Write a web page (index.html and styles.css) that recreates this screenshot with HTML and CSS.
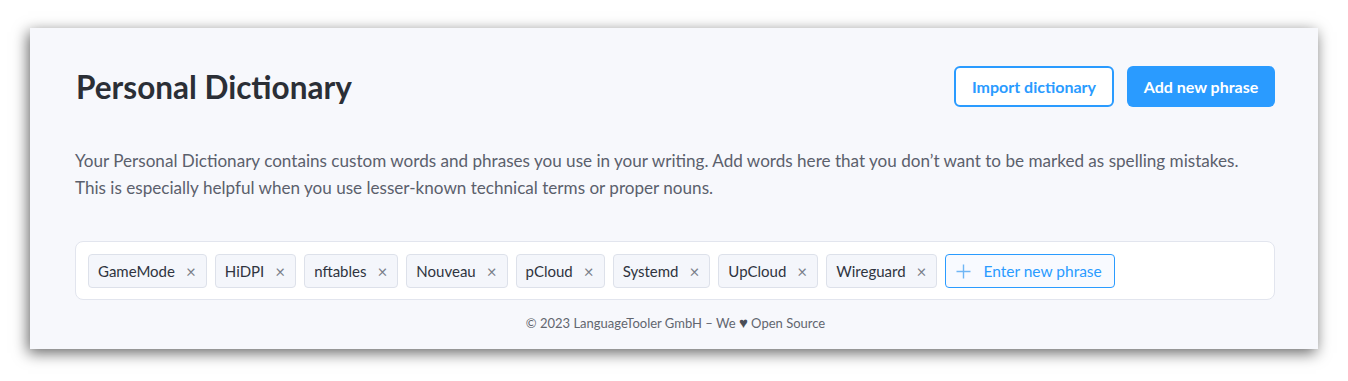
FILE: index.html
```html
<!DOCTYPE html>
<html lang="en">
<head>
    <meta charset="UTF-8">
    <meta name="viewport" content="width=device-width, initial-scale=1.0">
    <title>Personal Dictionary</title>
    <link rel="stylesheet" href="styles.css">
</head>
<body>
    <div class="window">
        <div class="page-header">
            <h1>Personal Dictionary</h1>
            <div class="actions">
                <button class="btn btn-outline">Import dictionary</button>
                <button class="btn btn-primary">Add new phrase</button>
            </div>
        </div>

        <p class="intro">
            Your Personal Dictionary contains custom words and phrases you use in your writing. Add words here that you don’t want to be marked as spelling mistakes.<br>
            This is especially helpful when you use lesser-known technical terms or proper nouns.
        </p>

        <!-- Phrase list -->
        <div class="phrase-box">
            <span class="tag">GameMode <span class="tag-remove">&times;</span></span>
            <span class="tag">HiDPI <span class="tag-remove">&times;</span></span>
            <span class="tag">nftables <span class="tag-remove">&times;</span></span>
            <span class="tag">Nouveau <span class="tag-remove">&times;</span></span>
            <span class="tag">pCloud <span class="tag-remove">&times;</span></span>
            <span class="tag">Systemd <span class="tag-remove">&times;</span></span>
            <span class="tag">UpCloud <span class="tag-remove">&times;</span></span>
            <span class="tag">Wireguard <span class="tag-remove">&times;</span></span>
            <span class="new-phrase">
                <svg width="15" height="15" viewBox="0 0 15 15"><path d="M7.5 0.5v14M0.5 7.5h14" stroke="currentColor" stroke-width="1.4" fill="none"/></svg>
                Enter new phrase
            </span>
        </div>

        <div class="footer">&copy; 2023 LanguageTooler GmbH &ndash; We <span class="heart">&hearts;</span> Open Source</div>
    </div>
</body>
</html>
```

FILE: styles.css
```css
body {
    margin: 0;
    padding: 28px 30px;
    background-color: #ffffff;
    font-family: "Source Sans Pro", Lato, "Noto Sans", sans-serif;
    color: #2c3038;
}
.window {
    width: 1288px;
    height: 321px;
    box-sizing: border-box;
    padding: 38px 43px 0 46px;
    background-color: #f7f8fc;
    box-shadow: -2px 4px 14px rgba(0, 0, 0, 0.6);
}
.page-header {
    display: flex;
    justify-content: space-between;
    align-items: center;
    height: 41px;
}
h1 {
    margin: 0;
    font-size: 31.5px;
    font-weight: 700;
    color: #2b2f36;
}
.actions {
    display: flex;
    gap: 13px;
}
.btn {
    height: 41px;
    border-radius: 6px;
    font-family: inherit;
    font-size: 16px;
    font-weight: 700;
    padding: 0;
    cursor: pointer;
}
.btn-outline {
    width: 160px;
    background-color: #ffffff;
    color: #2a9bff;
    border: 2px solid #2a9bff;
}
.btn-primary {
    width: 148px;
    background-color: #2a9bff;
    color: #ffffff;
    border: none;
}
.intro {
    margin: 40px 0 0 -1px;
    font-size: 17.1px;
    line-height: 27px;
    color: #5b606c;
}
.phrase-box {
    margin: 40px 0 0 -1px;
    display: flex;
    flex-wrap: wrap;
    gap: 8px;
    padding: 12px 12px 11px;
    background-color: #ffffff;
    border: 1px solid #e2e5ee;
    border-radius: 8px;
}
.tag {
    display: inline-flex;
    align-items: center;
    gap: 11px;
    height: 34px;
    box-sizing: border-box;
    padding: 0 10px 0 9px;
    background-color: #f4f6fb;
    border: 1px solid #dde1ea;
    border-radius: 4px;
    font-size: 15px;
    color: #2f3440;
}
.tag-remove {
    font-size: 17px;
    color: #7a7f89;
}
.new-phrase {
    display: inline-flex;
    align-items: center;
    gap: 12px;
    height: 34px;
    box-sizing: border-box;
    padding: 0 12px 0 10px;
    border: 1px solid #2a9bff;
    border-radius: 4px;
    background-color: #f8faff;
    color: #2a9bff;
    font-size: 15.5px;
}
.new-phrase svg {
    color: #6fb6f5;
}
.footer {
    margin-top: 12px;
    text-align: center;
    font-size: 13px;
    line-height: 20px;
    color: #62666f;
}
.heart {
    font-size: 15px;
    color: #4a4e57;
}
```
